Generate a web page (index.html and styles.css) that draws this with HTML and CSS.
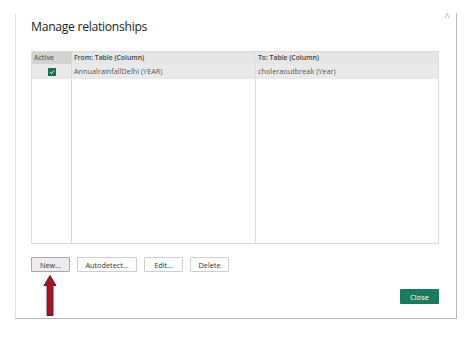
FILE: index.html
```html
<!DOCTYPE html>
<html>
<head>
<meta charset="utf-8">
<link rel="stylesheet" href="styles.css">
</head>
<body>
<div class="dialog">
  <span class="scroll-up">&#94;</span>
  <h1 class="title">Manage relationships</h1>
  <div class="table">
    <div class="col col-active">
      <div class="th th-active">Active</div>
      <div class="td td-check"><span class="check"><svg width="6" height="6" viewBox="0 0 6 6"><path d="M1 3.2 L2.4 4.6 L5 1.6" fill="none" stroke="#fff" stroke-width="1"/></svg></span></div>
      <div class="fill"></div>
    </div>
    <div class="col col-from">
      <div class="th">From: Table (Column)</div>
      <div class="td">AnnualrainfallDelhi (YEAR)</div>
      <div class="fill"></div>
    </div>
    <div class="col col-to">
      <div class="th">To: Table (Column)</div>
      <div class="td">choleraoutbreak (Year)</div>
      <div class="fill"></div>
    </div>
  </div>
  <div class="actions">
    <button class="btn btn-new">New...</button>
    <button class="btn btn-auto">Autodetect...</button>
    <button class="btn btn-edit">Edit...</button>
    <button class="btn btn-delete">Delete</button>
  </div>
  <div class="footer">
    <button class="btn-close">Close</button>
  </div>
  <svg class="arrow" width="14" height="42" viewBox="0 0 14 42">
    <path d="M7 0.5 L13 10.5 L10 10.5 L10 40.5 L4 40.5 L4 10.5 L1 10.5 Z" fill="#b0101e" stroke="#3b2a55" stroke-width="1"/>
  </svg>
</div>
</body>
</html>
```
FILE: styles.css
```css
* { box-sizing: border-box; }
body {
  margin: 0;
  background: #fff;
  font-family: "Open Sans", "Noto Sans", sans-serif;
  color: #333;
}
.dialog {
  position: relative;
  margin: 13px 0 0 15px;
  width: 442px;
  height: 306px;
  border-left: 1px solid #e2e2e2;
  border-right: 1px solid #b9b9b9;
  border-bottom: 1px solid #b9b9b9;
  padding: 0 17px 0 15px;
  display: flex;
  flex-direction: column;
}
.scroll-up {
  position: absolute;
  right: 6px;
  top: -3px;
  font-size: 10px;
  color: #aaa;
}
.title {
  margin: 4px 0 0 0;
  font-size: 12.2px;
  font-weight: 500;
  color: #1e1e1e;
  height: 34px;
  line-height: 20px;
  letter-spacing: -0.3px;
}
.table {
  display: flex;
  height: 193px;
  border: 1px solid #dcdcdc;
  font-size: 6.8px;
}
.col {
  display: flex;
  flex-direction: column;
}
.col-active { width: 40px; border-right: 1px solid #d8d8d8; }
.col-from { width: 184px; border-right: 1px solid #dedede; }
.col-to { flex: 1; }
.th {
  height: 12px;
  line-height: 12px;
  background: #e6e6e6;
  padding-left: 2px;
  font-weight: 600;
  color: #444;
}
.th-active { background: #d2d2d2; color: #666; padding-left: 2px; }
.td {
  height: 15px;
  line-height: 14px;
  background: #e9e9e9;
  padding-left: 2px;
  font-size: 7.3px;
  color: #555;
}
.td-check {
  display: flex;
  align-items: center;
  justify-content: center;
  padding-left: 0;
}
.check {
  width: 8px;
  height: 8px;
  background: #1b6f5a;
  display: flex;
  align-items: center;
  justify-content: center;
}
.fill { flex: 1; }
.actions {
  display: flex;
  gap: 7px;
  margin-top: 13px;
}
.btn {
  height: 15px;
  padding: 0;
  font-family: "Open Sans", "Noto Sans", sans-serif;
  font-size: 7.3px;
  color: #333;
  background: #fff;
  border: 1px solid #cfcfcf;
  border-radius: 1px;
}
.btn-new { width: 39px; background: #ececec; border-color: #a9a9a9; }
.btn-auto { width: 60px; }
.btn-edit { width: 39px; }
.btn-delete { width: 39px; }
.footer {
  display: flex;
  justify-content: flex-end;
  margin-top: 17px;
}
.btn-close {
  width: 39px;
  height: 15px;
  padding: 0;
  background: #1a7a5e;
  border: none;
  border-radius: 1px;
  color: #fff;
  font-family: "Open Sans", "Noto Sans", sans-serif;
  font-size: 7.5px;
}
.arrow {
  position: absolute;
  left: 27px;
  top: 262px;
}
```
